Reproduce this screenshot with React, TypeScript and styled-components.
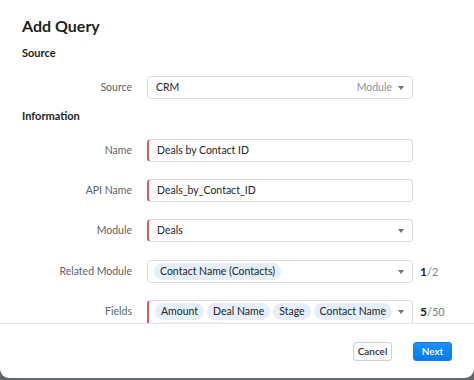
import React from "react";
import styled, { createGlobalStyle } from "styled-components";

const Global = createGlobalStyle`
  html, body { margin: 0; padding: 0; }
  body {
    background: #62666d;
    font-family: Lato, "Liberation Sans", sans-serif;
    width: 474px;
    height: 380px;
    overflow: hidden;
  }
`;

const Dialog = styled.div`
  width: 474px;
  height: 378px;
  background: #fff;
  border-radius: 0 0 9px 9px;
  display: flex;
  flex-direction: column;
  overflow: hidden;
`;

const Scroll = styled.div`
  flex: 1;
  overflow: hidden;
  padding: 16px 22px 0 22px;
`;

const Title = styled.h1`
  margin: 0;
  font-size: 16px;
  font-weight: 700;
  color: #1d1f24;
  line-height: 20px;
`;

const Section = styled.h2<{ $top: number }>`
  margin: ${(p) => p.$top}px 0 0 0;
  font-size: 11px;
  font-weight: 700;
  color: #1d1f24;
  line-height: 14px;
`;

const Row = styled.div<{ $top: number }>`
  display: grid;
  grid-template-columns: 110px 266px auto;
  column-gap: 15px;
  align-items: start;
  margin-top: ${(p) => p.$top}px;
`;

const Label = styled.div`
  text-align: right;
  font-size: 10.5px;
  line-height: 23px;
  color: #5d626c;
`;

const Field = styled.div<{ $required?: boolean }>`
  box-sizing: border-box;
  min-height: 23px;
  border: 1px solid #d9dce1;
  border-left: ${(p) => (p.$required ? "2px solid #e2535a" : "1px solid #d9dce1")};
  border-radius: 4px;
  display: flex;
  align-items: flex-start;
  padding: 0 8px;
  font-size: 10.5px;
  line-height: 21px;
  color: #23262b;
`;

const Value = styled.span`
  flex: 1;
`;

const Hint = styled.span`
  color: #8a90a0;
  margin-right: 6px;
`;

const Caret = styled.span`
  width: 0;
  height: 0;
  margin-top: 9px;
  border-left: 3.5px solid transparent;
  border-right: 3.5px solid transparent;
  border-top: 4px solid #6d717a;
`;

const Chips = styled.div`
  flex: 1;
  display: flex;
  flex-wrap: wrap;
  gap: 2px 3px;
  padding: 2px 0;
  margin-left: -2px;
`;

const Chip = styled.span`
  background: #e5eef9;
  border-radius: 10px;
  padding: 0 6px;
  height: 17px;
  line-height: 17px;
  white-space: nowrap;
`;

const Count = styled.div`
  font-size: 11px;
  line-height: 23px;
  color: #7b808a;
  margin-left: -8px;
`;

const Strong = styled.b`
  color: #1d1f24;
  font-weight: 700;
  font-size: 12px;
`;

const Footer = styled.div`
  border-top: 1px solid #e3e5e8;
  height: 54px;
  display: flex;
  align-items: center;
  justify-content: flex-end;
  gap: 21px;
  padding: 0 22px 0 0;
  flex-shrink: 0;
`;

const Button = styled.button<{ $primary?: boolean }>`
  font-family: Lato, "Liberation Sans", sans-serif;
  font-size: 10px;
  font-weight: 600;
  height: 19px;
  width: 39px;
  padding: 0;
  border-radius: 3px;
  border: 1px solid ${(p) => (p.$primary ? "#0b7ef0" : "#cfd3d9")};
  background: ${(p) => (p.$primary ? "linear-gradient(#1a92ff, #0878ea)" : "#fbfbfc")};
  color: ${(p) => (p.$primary ? "#fff" : "#333")};
  box-sizing: border-box;
`;

export default function App() {
  return (
    <>
      <Global />
      <Dialog>
        <Scroll>
          <Title>Add Query</Title>
          <Section $top={10}>Source</Section>
          <Row $top={16}>
            <Label>Source</Label>
            <Field>
              <Value>CRM</Value>
              <Hint>Module</Hint>
              <Caret />
            </Field>
          </Row>
          <Section $top={10}>Information</Section>
          <Row $top={16}>
            <Label>Name</Label>
            <Field $required>
              <Value>Deals by Contact ID</Value>
            </Field>
          </Row>
          <Row $top={17}>
            <Label>API Name</Label>
            <Field $required>
              <Value>Deals_by_Contact_ID</Value>
            </Field>
          </Row>
          <Row $top={17}>
            <Label>Module</Label>
            <Field $required>
              <Value>Deals</Value>
              <Caret />
            </Field>
          </Row>
          <Row $top={18}>
            <Label>Related Module</Label>
            <Field>
              <Chips>
                <Chip>Contact Name (Contacts)</Chip>
              </Chips>
              <Caret />
            </Field>
            <Count>
              <Strong>1</Strong>/2
            </Count>
          </Row>
          <Row $top={17}>
            <Label>Fields</Label>
            <Field $required>
              <Chips>
                <Chip>Amount</Chip>
                <Chip>Deal Name</Chip>
                <Chip>Stage</Chip>
                <Chip>Contact Name</Chip>
                <Chip>Created Time</Chip>
              </Chips>
              <Caret />
            </Field>
            <Count>
              <Strong>5</Strong>/50
            </Count>
          </Row>
        </Scroll>
        <Footer>
          <Button>Cancel</Button>
          <Button $primary>Next</Button>
        </Footer>
      </Dialog>
    </>
  );
}
